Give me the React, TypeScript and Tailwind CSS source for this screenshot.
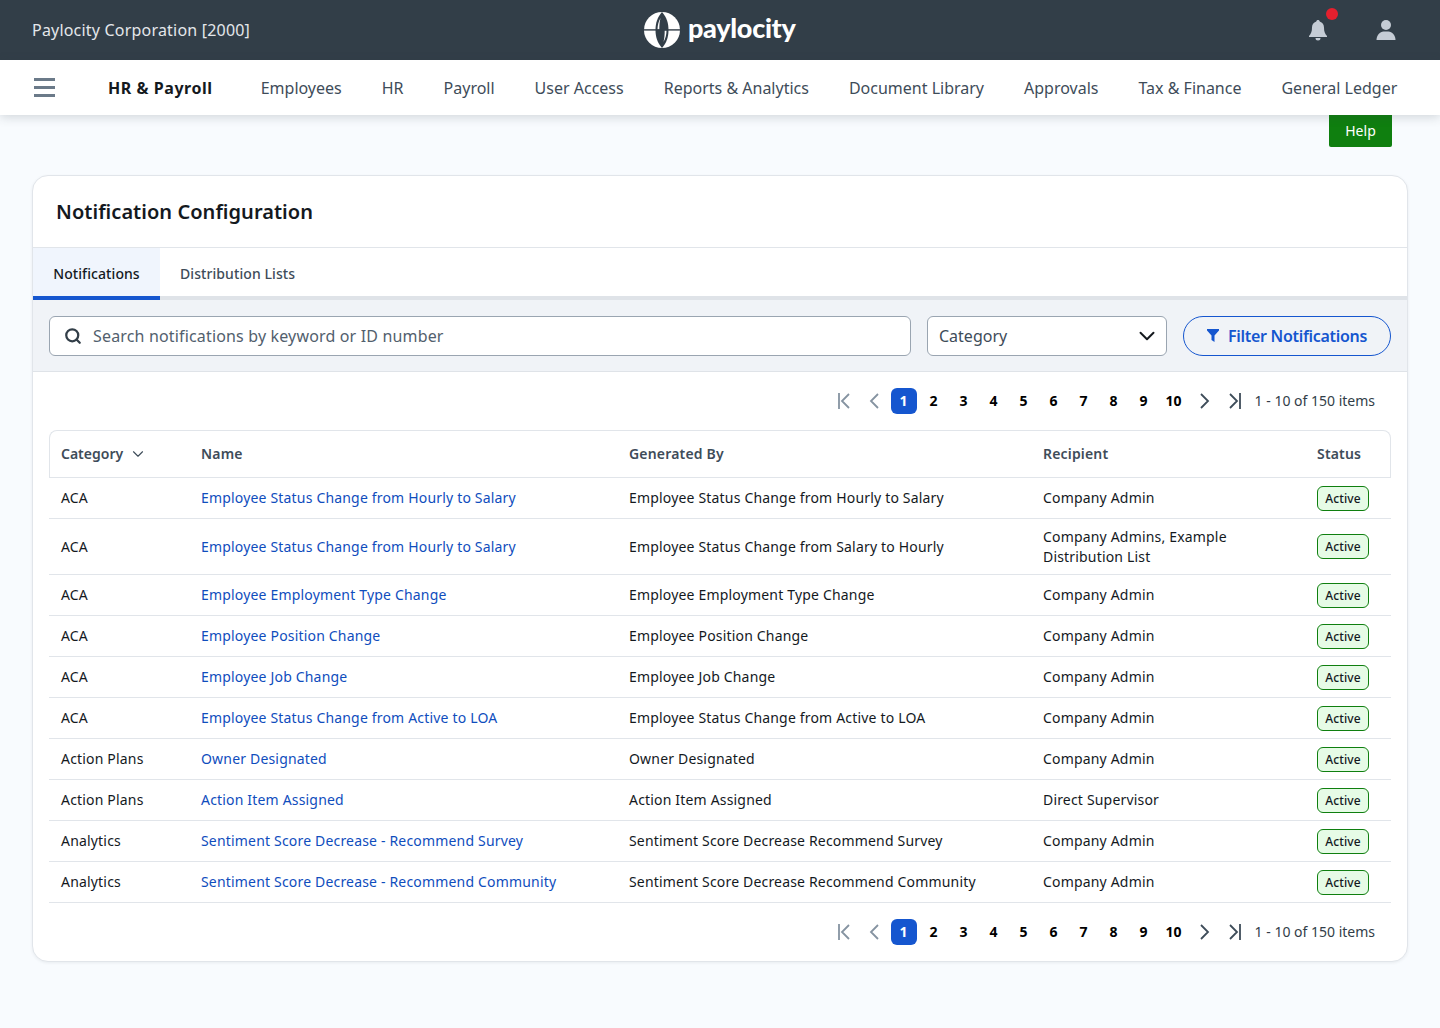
import { ChevronDown, Search } from "lucide-react";

const navItems = [
  "Employees",
  "HR",
  "Payroll",
  "User Access",
  "Reports & Analytics",
  "Document Library",
  "Approvals",
  "Tax & Finance",
  "General Ledger",
];

const rows = [
  { category: "ACA", name: "Employee Status Change from Hourly to Salary", generatedBy: "Employee Status Change from Hourly to Salary", recipient: "Company Admin" },
  { category: "ACA", name: "Employee Status Change from Hourly to Salary", generatedBy: "Employee Status Change from Salary to Hourly", recipient: "Company Admins, Example Distribution List" },
  { category: "ACA", name: "Employee Employment Type Change", generatedBy: "Employee Employment Type Change", recipient: "Company Admin" },
  { category: "ACA", name: "Employee Position Change", generatedBy: "Employee Position Change", recipient: "Company Admin" },
  { category: "ACA", name: "Employee Job Change", generatedBy: "Employee Job Change", recipient: "Company Admin" },
  { category: "ACA", name: "Employee Status Change from Active to LOA", generatedBy: "Employee Status Change from Active to LOA", recipient: "Company Admin" },
  { category: "Action Plans", name: "Owner Designated", generatedBy: "Owner Designated", recipient: "Company Admin" },
  { category: "Action Plans", name: "Action Item Assigned", generatedBy: "Action Item Assigned", recipient: "Direct Supervisor" },
  { category: "Analytics", name: "Sentiment Score Decrease - Recommend Survey", generatedBy: "Sentiment Score Decrease Recommend Survey", recipient: "Company Admin" },
  { category: "Analytics", name: "Sentiment Score Decrease - Recommend Community", generatedBy: "Sentiment Score Decrease Recommend Community", recipient: "Company Admin" },
];

const pages = [2, 3, 4, 5, 6, 7, 8, 9, 10];

const Logo = () => (
  <svg viewBox="0 0 36 36" className="h-9 w-9">
    <circle cx="18" cy="18" r="18" fill="#fff" />
    <path d="M18 0C13.500 5 11.500 11 11.500 18S13.500 31 18 36C22.500 31 24.500 25 24.500 18S22.500 5 18 0z" fill="#323e48" />
    <path d="M16.500 6C14.500 9.500 13.500 13.500 13.500 17.500h1.800C15.300 13.500 15.600 9.500 16.500 6z" fill="#fff" />
    <path d="M19.500 30C21.500 26.500 22.500 22.500 22.500 18.500h-1.800C20.700 22.500 20.400 26.500 19.500 30z" fill="#fff" />
    <rect x="0" y="17.200" width="36" height="1.400" fill="#323e48" />
  </svg>
);

const Pagination = () => (
  <div className="flex h-[26px] items-center justify-end pr-8 text-sm">
    <svg viewBox="0 0 12 16" className="h-4 w-3" fill="none" stroke="#8593a1" strokeWidth="1.8">
      <path d="M1 0v16M11 1 4 8l7 7" />
    </svg>
    <svg viewBox="0 0 10 16" className="ml-[19px] h-4 w-[10px]" fill="none" stroke="#8593a1" strokeWidth="1.8">
      <path d="M9 1 2 8l7 7" />
    </svg>
    <span className="ml-3 flex h-[26px] w-[26px] items-center justify-center rounded-md bg-[#1556cf] font-bold text-white">1</span>
    <div className="ml-[2px] flex">
      {pages.map((page) => (
        <span key={page} className="flex h-[26px] w-[30px] items-center justify-center font-bold text-black">
          {page}
        </span>
      ))}
    </div>
    <svg viewBox="0 0 10 16" className="ml-[11px] h-4 w-[10px]" fill="none" stroke="#3e4c59" strokeWidth="1.8">
      <path d="m1 1 7 7-7 7" />
    </svg>
    <svg viewBox="0 0 12 16" className="ml-[19px] h-4 w-3" fill="none" stroke="#3e4c59" strokeWidth="1.8">
      <path d="M11 0v16M1 1l7 7-7 7" />
    </svg>
    <span className="ml-[14px] text-[#323e48]">1 - 10 of 150 items</span>
  </div>
);

export default function App() {
  return (
    <div className="min-h-[1028px] bg-[#f8fbfe] font-['Noto_Sans',sans-serif]">
      <header className="relative flex h-[60px] items-center justify-between bg-[#323e48] pl-8 pr-[42px] text-white">
        <span className="text-base tracking-[0.2px] text-[#e4e7eb]">Paylocity Corporation [2000]</span>
        <div className="absolute left-[644px] top-3 flex items-center gap-2">
          <Logo />
          <span className="-mt-1 font-['Lato',sans-serif] text-[27px] font-black leading-8 tracking-[-0.3px]">paylocity</span>
        </div>
        <div className="flex items-center gap-11">
          <div className="relative">
            <svg viewBox="0 0 24 24" className="h-6 w-6" fill="#c5ccd5">
              <path d="M12 2c-.9 0-1.600.6-1.700 1.400C7.500 4.200 6 6.700 6 9.500c0 4-.8 6-3 8.500v1h18v-1c-2.200-2.500-3-4.500-3-8.500 0-2.800-1.500-5.300-4.300-6.100C13.600 2.600 12.900 2 12 2zM9.500 20a2.500 2.500 0 0 0 5 0z" />
            </svg>
            <span className="absolute -right-2 -top-[10px] h-3 w-3 rounded-full bg-[#e5202e]" />
          </div>
          <svg viewBox="0 0 24 24" className="h-6 w-6" fill="#c5ccd5">
            <circle cx="12" cy="7" r="5" />
            <path d="M2.500 22c0-5 3.500-8 7-8.500h5c3.500.5 7 3.500 7 8.500z" />
          </svg>
        </div>
      </header>

      <nav className="relative z-10 flex h-[55px] items-center bg-white pl-[34px] shadow-[0_2px_10px_rgba(50,62,72,0.2)]">
        <div className="flex w-[21px] flex-col gap-[5px]">
          <span className="h-[3px] bg-[#6b7a89]" />
          <span className="h-[3px] bg-[#6b7a89]" />
          <span className="h-[3px] bg-[#6b7a89]" />
        </div>
        <span className="ml-[53px] mr-[48px] text-base font-bold tracking-[0.55px] text-[#14191e]">HR &amp; Payroll</span>
        <div className="flex gap-10 text-base text-[#3e4c59]">
          {navItems.map((item) => (
            <a key={item} href="#">
              {item}
            </a>
          ))}
        </div>
      </nav>

      <div className="flex justify-end pr-12">
        <button className="h-8 w-[63px] rounded-b-[2px] bg-[#0f7f0f] text-sm text-white">Help</button>
      </div>

      <main className="mx-8 mt-7 overflow-hidden rounded-2xl border border-[#e1e5ea] bg-white pb-4 shadow-[0_1px_3px_rgba(50,62,72,0.08)]">
        <h1 className="flex h-[72px] items-center border-b border-[#e1e5ea] pl-[23px] text-xl font-semibold tracking-[0.04px] text-[#14191e]">
          Notification Configuration
        </h1>

        <div className="flex h-[52px] border-b-4 border-[#dfe3e8] text-sm tracking-[0.08px]">
          <div className="-mb-1 flex h-[52px] w-[127px] items-center justify-center border-b-4 border-[#1556cf] bg-[#f0f5fd] pt-1 font-medium text-[#14191e]">
            Notifications
          </div>
          <div className="flex h-12 items-center px-5 pt-1 font-medium text-[#3e4c59]">Distribution Lists</div>
        </div>

        <div className="flex h-[72px] items-center gap-4 border-b border-[#dfe3e8] bg-[#f0f3f7] px-4">
          <div className="flex h-10 flex-1 items-center rounded-md border border-[#9aa5b1] bg-white pl-[14px] text-base tracking-[0.16px] text-[#52606d]">
            <Search className="mr-[11px] h-[18px] w-[18px] text-[#323e48]" strokeWidth={3} />
            Search notifications by keyword or ID number
          </div>
          <div className="flex h-10 w-[240px] items-center justify-between rounded-md border border-[#9aa5b1] bg-white pl-[11px] pr-[6px] text-base text-[#3e4c59]">
            Category
            <ChevronDown className="h-[26px] w-[26px] text-[#14191e]" strokeWidth={1.8} />
          </div>
          <button className="flex h-10 w-[208px] items-center justify-center gap-[9px] rounded-full border border-[#1556cf] bg-[#f0f3f7] text-base font-semibold tracking-[-0.3px] text-[#1556cf]">
            <svg viewBox="0 0 12 13" className="h-[13px] w-3" fill="#1556cf">
              <path d="M0 0h12v1.500L7.500 6.500V13l-3-2V6.500L0 1.500z" />
            </svg>
            Filter Notifications
          </button>
        </div>

        <div className="mt-4">
          <Pagination />
        </div>

        <div className="mx-4 mt-4">
          <table className="w-full table-fixed border-separate border-spacing-0 text-sm tracking-[0.18px] text-[#14191e]">
            <colgroup>
              <col className="w-[140px]" />
              <col className="w-[428px]" />
              <col className="w-[414px]" />
              <col className="w-[274px]" />
              <col />
            </colgroup>
            <thead>
              <tr className="h-12 text-left text-[#3e4c59]">
                <th className="rounded-tl-lg border-y border-l border-[#e1e5ea] pl-[11px] font-semibold tracking-normal">
                  <span className="flex items-center gap-[6px]">
                    Category
                    <ChevronDown className="h-[18px] w-[18px]" strokeWidth={1.5} />
                  </span>
                </th>
                <th className="border-y border-[#e1e5ea] pl-3 font-semibold">Name</th>
                <th className="border-y border-[#e1e5ea] pl-3 font-semibold">Generated By</th>
                <th className="border-y border-[#e1e5ea] pl-3 font-semibold">Recipient</th>
                <th className="rounded-tr-lg border-y border-r border-[#e1e5ea] pl-3 font-semibold">Status</th>
              </tr>
            </thead>
            <tbody>
              {rows.map((row, i) => (
                <tr key={i} className={row.recipient.length > 20 ? "h-[56px]" : "h-[41px]"}>
                  <td className="border-b border-[#e1e5ea] pl-3">{row.category}</td>
                  <td className="border-b border-[#e1e5ea] pl-3">
                    <a href="#" className="text-[#0f4dbd]">
                      {row.name}
                    </a>
                  </td>
                  <td className="border-b border-[#e1e5ea] pl-3">{row.generatedBy}</td>
                  <td className="border-b border-[#e1e5ea] pl-3 pr-8 leading-5">{row.recipient}</td>
                  <td className="border-b border-[#e1e5ea] pl-3">
                    <span className="flex h-[25px] w-[52px] items-center justify-center rounded-md border border-[#0f7f0f] bg-[#e6fbe6] pt-px text-xs font-medium tracking-[0.1px] text-[#14191e]">
                      Active
                    </span>
                  </td>
                </tr>
              ))}
            </tbody>
          </table>
        </div>

        <div className="mt-4">
          <Pagination />
        </div>
      </main>
    </div>
  );
}
